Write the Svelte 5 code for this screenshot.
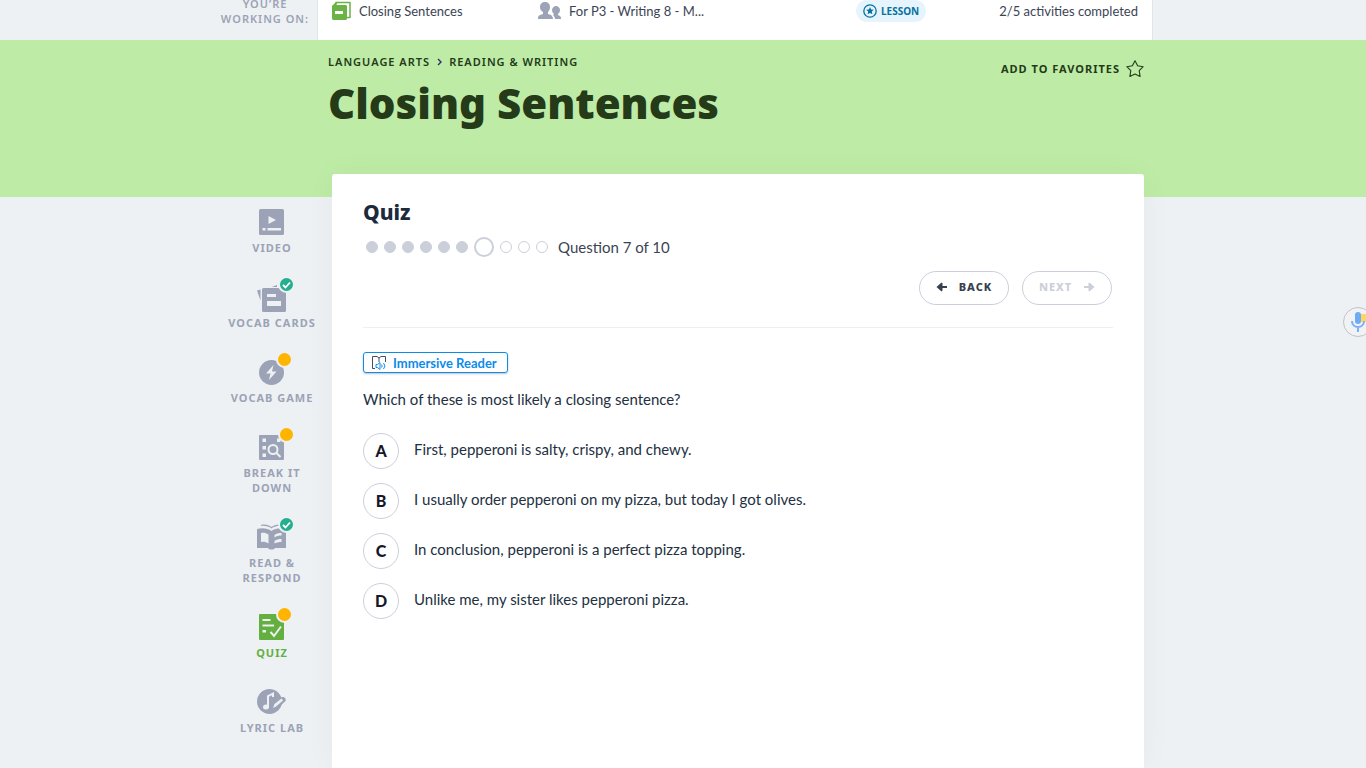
<script>
    // Activities of the lesson, in the order of the side menu.
    const activities = [
        { id: 'video', label: 'Video' },
        { id: 'cards', label: 'Vocab Cards', status: 'done', wide: true },
        { id: 'game', label: 'Vocab Game', status: 'pending' },
        { id: 'break', label: 'Break It Down', status: 'pending', wide: true },
        { id: 'read', label: 'Read & Respond', status: 'done', wide: true },
        { id: 'quiz', label: 'Quiz', status: 'pending' },
        { id: 'lyric', label: 'Lyric Lab' },
    ];

    const answers = [
        { letter: 'A', text: 'First, pepperoni is salty, crispy, and chewy.' },
        { letter: 'B', text: 'I usually order pepperoni on my pizza, but today I got olives.' },
        { letter: 'C', text: 'In conclusion, pepperoni is a perfect pizza topping.' },
        { letter: 'D', text: 'Unlike me, my sister likes pepperoni pizza.' },
    ];

    const total = 10;
    let current = $state(7);
    let selected = $state('');
    let active = $state('quiz');
</script>

<div class="topbar">
    <div class="container topbar-row">
        <div class="working-on">You’re working on:</div>
        <div class="assignment">
            <a class="assignment-link" href="#topic">
                <svg width="20" height="20" viewBox="0 0 20 20" aria-hidden="true">
                    <path d="M4 3.500V1.500h14v15h-3" fill="none" stroke="#6ab344" stroke-width="1.5" stroke-linejoin="round" />
                    <path d="M0 5 4 1h2L4 4h10l1 1v13l-1 1H1l-1-1z" fill="#6ab344" />
                    <path d="M3 10h8v3H3z" fill="#fff" />
                </svg>
                Closing Sentences
            </a>
            <div class="assignment-class">
                <svg width="24" height="18" viewBox="0 0 24 18" aria-hidden="true">
                    <path d="M7 0c3 0 5 2 5 5 0 2-1 4-2 5v2l3 1c1 1 2 2 2 4H0c0-2 0-3 2-4l3-1v-2C3 9 2 7 2 5c0-3 2-5 5-5z" fill="#9ca3b6" />
                    <path d="M18 4c2 0 4 2 4 4s-1 3-2 4v1l2 1c1 1 1 2 1 3h-6c0-2-1-3-2-4l1-1c-1-1-2-2-2-4s2-4 4-4z" fill="#9ca3b6" />
                </svg>
                For P3 - Writing 8 - M...
            </div>
            <div>
                <span class="badge">
                    <svg width="14" height="14" viewBox="0 0 14 14" aria-hidden="true">
                        <circle cx="7" cy="7" r="6.2" fill="none" stroke="#0671a0" stroke-width="1.3" />
                        <path d="m7 3 1.1 2.5 2.7.3-2 1.8.6 2.7L7 8.900l-2.400 1.400.6-2.700-2-1.800 2.700-.3z" fill="#0671a0" />
                    </svg>
                    Lesson
                </span>
            </div>
            <div class="completed">2/5 activities completed</div>
        </div>
    </div>
</div>

<header class="hero">
    <div class="container hero-row">
        <div>
            <nav class="breadcrumb" aria-label="Breadcrumb">
                <a href="#language-arts">Language Arts</a>
                <svg width="5" height="8" viewBox="0 0 5 8" aria-hidden="true">
                    <path d="m1 1 3 3-3 3" fill="none" stroke="#2b2f6b" stroke-width="1.4" />
                </svg>
                <a href="#reading-writing">Reading &amp; Writing</a>
            </nav>
            <h1>Closing Sentences</h1>
        </div>
        <button class="favorite">
            Add to favorites
            <svg width="18" height="18" viewBox="0 0 18 18" aria-hidden="true">
                <path d="m9 .8 2.600 5 5.600.9-4 4 .9 5.700L9 14l-5.100 2.400.9-5.700-4-4 5.600-.9z" fill="none" stroke="#243a18" stroke-width="1.1" stroke-linejoin="round" />
            </svg>
        </button>
    </div>
</header>

<div class="container layout">
    <nav class="activities" aria-label="Activities">
        {#each activities as item}
            <a href="#{item.id}" class="activity" class:active={active === item.id} onclick={() => (active = item.id)}>
                <span class="activity-icon">
                    <svg width="30" height="28" viewBox="0 0 30 28" aria-hidden="true">
                        {#if item.id === 'video'}
                            <rect x="2" y="1" width="25" height="26" rx="1.500" />
                            <path class="cut" d="m11.500 8 7.500 4-7.500 4zM5.500 20h3v2.500h-3zM10.500 20h13.500v2.500h-13.500z" />
                        {:else if item.id === 'cards'}
                            <path d="M0 7.500 3.500 6.500v11zM12 5l8-3v3z" />
                            <rect class="cut" x="4" y="4" width="25" height="23" />
                            <rect x="5" y="5" width="24" height="24" rx="1.500" />
                            <path class="cut" d="M10 11h9v3h-9zM10 18h14v5h-14z" />
                        {:else if item.id === 'game'}
                            <circle cx="14.500" cy="14.500" r="12.500" />
                            <path class="cut" d="M16.500 7 9 15.500h4.500l-1.500 6.500 7.500-8.500H15z" />
                        {:else if item.id === 'break'}
                            <rect x="2" y="2" width="25" height="25" rx="1" />
                            <path class="cut" d="M5.500 5.500H9V9H5.500zM5.500 13H9v3.500H5.500zM5.500 20.500H9V24H5.500zM20 5.500h3.500V9H20z" />
                            <circle class="cut-line" cx="16" cy="16.500" r="4.500" />
                            <path class="cut-line" d="m19.500 20 4 4" />
                        {:else if item.id === 'read'}
                            <path d="M4 2c4-1 8 0 10.500 2C17 2 21 1 25 2v1c-4-.5-8 .5-10.500 2.500C12 3.500 8 2.500 4 3z" />
                            <path d="M0 6c5-1.500 11-1 14.500 2C18 5 24 4.500 29 6v19H18c-1 2-6 2-7 0H0z" />
                            <path class="cut" d="M4 10c3-.5 5 0 7.500 1.500v9C9 19 7 18.500 4 19zM17.500 12c2-1.500 4-2 7-2v2.500c-3 0-5 .5-7 2zM17.500 18c2-1.500 4-2 7-2v3c-3 0-5 .5-7 1.500z" />
                        {:else if item.id === 'quiz'}
                            <rect x="2" y="1" width="25" height="26" rx="1" />
                            <path class="cut" d="M5.500 6h8v2h-8zM5.500 11.500h11.500v2h-11.500zM5.500 17h3.500v2.500H5.500z" />
                            <path class="cut-line" d="m13.500 19 3.500 4 7-9.500" />
                        {:else}
                            <circle cx="12.500" cy="13.500" r="12.500" />
                            <path d="m15 20 8-9c2-4 7-1 5.500 2L19 22z" />
                            <ellipse class="cut" cx="9" cy="19" rx="3" ry="2.500" />
                            <path class="cut-line" d="M11 19V8l5-2.500v3.500" />
                            <path class="cut" d="m16 20 1.500-4 7-5.500 1.500 2-7 6z" />
                        {/if}
                    </svg>
                    {#if item.status}
                        <span class="status {item.status}" class:wide={item.wide}>
                            {#if item.status === 'done'}
                                <svg width="9" height="8" viewBox="0 0 9 8" aria-hidden="true">
                                    <path d="m1 4 2.500 2.500L8 1.500" fill="none" stroke="#fff" stroke-width="1.800" />
                                </svg>
                            {/if}
                        </span>
                    {/if}
                </span>
                <span class="activity-label">{item.label}</span>
            </a>
        {/each}
    </nav>

    <main class="card">
        <h2>Quiz</h2>
        <div class="progress">
            {#each Array(total) as _, i}
                <span class="dot" class:filled={i + 1 < current} class:current={i + 1 === current}></span>
            {/each}
            <span class="progress-text">Question {current} of {total}</span>
        </div>

        <div class="controls">
            <button class="step" onclick={() => (current = Math.max(1, current - 1))}>
                <svg width="12" height="10" viewBox="0 0 12 10" aria-hidden="true">
                    <path d="M11 5H3" stroke="currentColor" stroke-width="2" />
                    <path d="m5.500.5 1 1v7l-1 1L.5 5z" fill="currentColor" />
                </svg>
                Back
            </button>
            <button class="step" disabled={!selected} onclick={() => (current = Math.min(total, current + 1))}>
                Next
                <svg width="12" height="10" viewBox="0 0 12 10" aria-hidden="true">
                    <path d="M1 5h8" stroke="currentColor" stroke-width="2" />
                    <path d="m6.500.5-1 1v7l1 1 5-4.500z" fill="currentColor" />
                </svg>
            </button>
        </div>

        <section class="question">
            <button class="reader">
                <svg width="16" height="16" viewBox="0 0 16 16" fill="none" aria-hidden="true">
                    <path d="M4 13.500H1.500v-12H6L8 3l2-1.500h4.500V7M8 3v4" stroke="#43505c" />
                    <path d="M5 9.500h1.500L9 7.500v7l-2.500-2H5zM10.500 9.500q1.500 1.500 0 3M12.500 8q3 3 0 6" stroke="#0c8ce9" />
                </svg>
                Immersive Reader
            </button>
            <p>Which of these is most likely a closing sentence?</p>
            <div class="answers">
                {#each answers as answer}
                    <button class="answer" class:selected={selected === answer.letter} onclick={() => (selected = answer.letter)}>
                        <span class="letter">{answer.letter}</span>
                        <span>{answer.text}</span>
                    </button>
                {/each}
            </div>
        </section>
    </main>
</div>

<button class="mic" aria-label="Voice typing">
    <svg width="18" height="22" viewBox="0 0 18 22" aria-hidden="true">
        <path d="M11 3h7v8h-7z" fill="#fdd663" />
        <rect x="6" y="1" width="6" height="12" rx="3" fill="#6faaf5" />
        <path d="M3 10c0 8 12 8 12 0M9 16v5" fill="none" stroke="#7bb1f6" stroke-width="2" />
    </svg>
</button>

<style>
    :global(body) {
        background: #edf1f4;
        color: #23303f;
        font-family: Lato, "Noto Sans", sans-serif;
        font-size: 15px;
    }

    a {
        color: inherit;
        text-decoration: none;
    }

    button {
        background: none;
        border: 0;
        padding: 0;
        color: inherit;
        font: inherit;
        cursor: pointer;
    }

    svg {
        flex: none;
    }

    .container {
        max-width: 940px;
        margin: 0 auto;
    }

    /* Assignment bar */
    .topbar {
        height: 40px;
    }

    .topbar-row {
        display: flex;
        height: 100%;
    }

    .working-on {
        width: 104px;
        margin-top: -4px;
        color: #9ca3b6;
        font: 600 11px/15px "Noto Sans", sans-serif;
        letter-spacing: 1px;
        text-align: center;
        text-transform: uppercase;
    }

    .assignment {
        box-sizing: border-box;
        display: grid;
        grid-template-columns: 206px 318px auto 1fr;
        align-items: center;
        flex: 1;
        padding: 0 14px 18px;
        background: #fff;
        border: solid #e1e5ec;
        border-width: 0 1px;
        color: #3b4454;
        font-size: 13px;
        line-height: 22px;
        white-space: nowrap;
    }

    .assignment-link,
    .assignment-class {
        display: flex;
        align-items: center;
        gap: 7px;
    }

    .badge {
        display: flex;
        align-items: center;
        gap: 4px;
        padding: 0 7px;
        border-radius: 11px;
        background: #e6f5fd;
        color: #0671a0;
        font: 700 10px/22px "Noto Sans", sans-serif;
        text-transform: uppercase;
    }

    .completed {
        text-align: right;
    }

    /* Topic header */
    .hero {
        height: 157px;
        background: #beeca6;
        color: #243a18;
    }

    .hero-row {
        box-sizing: border-box;
        display: flex;
        justify-content: space-between;
        align-items: flex-start;
        padding: 14px 9px 0 115px;
    }

    .breadcrumb {
        display: flex;
        align-items: center;
        gap: 7px;
    }

    .breadcrumb,
    .favorite {
        font: 600 11px/16px "Noto Sans", sans-serif;
        letter-spacing: 1px;
        text-transform: uppercase;
    }

    .favorite {
        display: flex;
        align-items: center;
        gap: 6px;
        margin-top: 6px;
        font-weight: 700;
    }

    h1 {
        margin: 3px 0 0;
        font: 900 42px/60px "Noto Sans", sans-serif;
    }

    .layout {
        display: grid;
        grid-template-columns: 118px 1fr;
        column-gap: 1px;
        box-sizing: border-box;
        padding-right: 9px;
    }

    /* Side menu */
    .activities {
        display: flex;
        flex-direction: column;
        gap: 28px;
        padding-top: 11px;
    }

    .activity {
        display: flex;
        flex-direction: column;
        align-items: center;
        gap: 4px;
        color: #9ca3b6;
    }

    .activity.active {
        color: #63b040;
    }

    .activity-icon {
        position: relative;
        height: 28px;
        fill: currentColor;
    }

    .activity-icon > svg {
        display: block;
        overflow: visible;
    }

    .cut {
        fill: #edf1f4;
    }

    .cut-line {
        fill: none;
        stroke: #edf1f4;
        stroke-width: 2;
    }

    .activity-label {
        max-width: 90px;
        font: 700 11px/15px "Noto Sans", sans-serif;
        letter-spacing: 1px;
        text-align: center;
        text-transform: uppercase;
    }

    .status {
        position: absolute;
        top: -7px;
        right: -6px;
        display: flex;
        align-items: center;
        justify-content: center;
        width: 13px;
        height: 13px;
        border: 2px solid #edf1f4;
        border-radius: 50%;
        background: #ffb400;
    }

    .status.wide {
        right: -8px;
    }

    .status.done {
        background: #26ae90;
    }

    /* Quiz card */
    .card {
        box-sizing: border-box;
        min-height: calc(100vh - 174px);
        margin-top: -23px;
        padding: 25px 31px;
        position: relative;
        background: #fff;
        border-radius: 3px 3px 0 0;
        box-shadow: 0 0 32px rgba(35, 48, 63, 0.04);
    }

    h2 {
        margin: 0;
        color: #1c2a3c;
        font: 800 21px/26px "Noto Sans", sans-serif;
    }

    .progress {
        display: flex;
        align-items: center;
        gap: 6px;
        height: 20px;
        padding-left: 3px;
        margin-top: 12px;
    }

    .dot {
        box-sizing: border-box;
        width: 12px;
        height: 12px;
        border: 1px solid #cbcfda;
        border-radius: 50%;
    }

    .dot.filled {
        background: #cbcfda;
    }

    .dot.current {
        width: 20px;
        height: 20px;
        border-width: 2px;
    }

    .progress-text {
        margin-left: 4px;
        color: #3b4454;
    }

    .controls {
        display: flex;
        justify-content: flex-end;
        gap: 13px;
        padding: 14px 1px 22px 0;
        border-bottom: 1px solid #edeff2;
    }

    .step {
        box-sizing: border-box;
        display: flex;
        align-items: center;
        justify-content: center;
        gap: 11px;
        width: 90px;
        height: 34px;
        padding-bottom: 2px;
        border: 1px solid #cbcfda;
        border-radius: 17px;
        color: #38414f;
        font: 800 11px/16px "Noto Sans", sans-serif;
        letter-spacing: 1px;
        text-transform: uppercase;
    }

    .step:disabled {
        color: #cbcfda;
        cursor: default;
    }

    .question {
        padding-top: 24px;
    }

    .reader {
        box-sizing: border-box;
        display: flex;
        align-items: center;
        gap: 6px;
        height: 21px;
        padding: 0 10px 0 7px;
        border: 1px solid #0c8ce9;
        border-radius: 3px;
        box-shadow: 0 1px 2px rgba(35, 48, 63, 0.3);
        color: #0c8ce9;
        font-size: 13px;
        font-weight: 700;
    }

    .question p {
        margin: 16px 0 23px;
        line-height: 21px;
    }

    .answers {
        display: flex;
        flex-direction: column;
        gap: 14px;
    }

    .answer {
        display: flex;
        align-items: flex-start;
        gap: 15px;
        line-height: 32px;
        text-align: left;
    }

    .letter {
        box-sizing: border-box;
        width: 36px;
        height: 36px;
        border: 1px solid #cbcfda;
        border-radius: 50%;
        color: #17172b;
        font-size: 16px;
        font-weight: 900;
        line-height: 34px;
        text-align: center;
    }

    .answer.selected .letter {
        background: #beeca6;
    }

    /* Floating dictation button */
    .mic {
        position: fixed;
        top: 307px;
        right: -7px;
        display: flex;
        align-items: center;
        justify-content: center;
        width: 30px;
        height: 30px;
        border: 1px solid #c0c2c6;
        border-radius: 50%;
        background: #f0f2f5;
    }
</style>
